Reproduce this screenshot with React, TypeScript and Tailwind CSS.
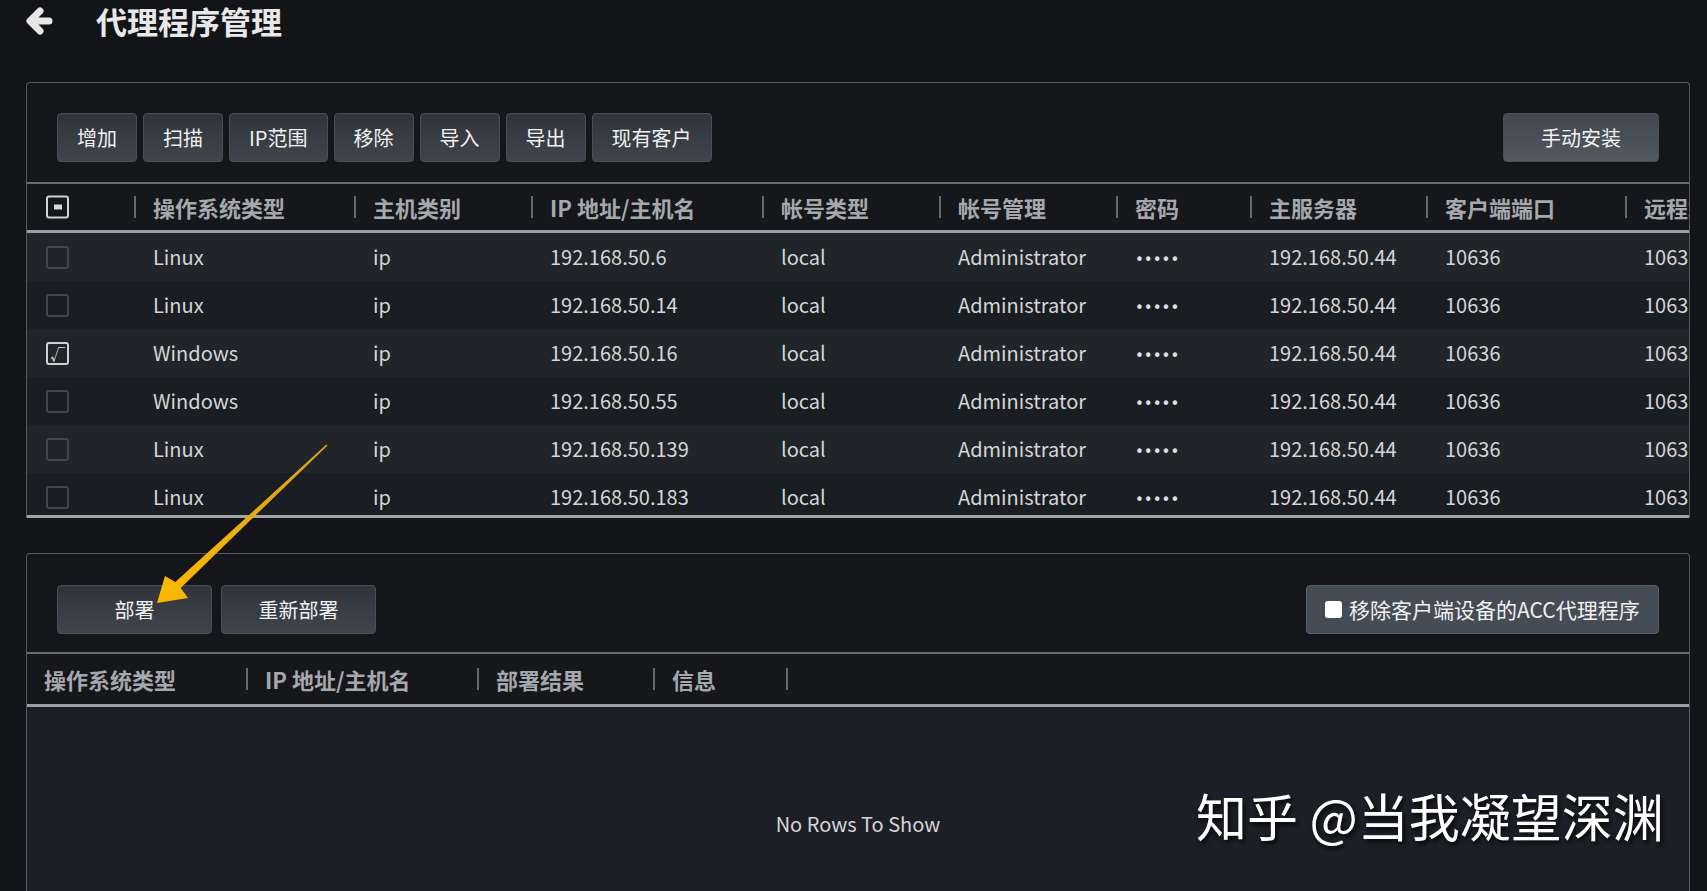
const ROWS = [
  { os: "Linux", ip: "192.168.50.6" },
  { os: "Linux", ip: "192.168.50.14" },
  { os: "Windows", ip: "192.168.50.16", checked: true },
  { os: "Windows", ip: "192.168.50.55" },
  { os: "Linux", ip: "192.168.50.139" },
  { os: "Linux", ip: "192.168.50.183" },
];

const COLS = [
  { label: "", w: "w-[109px]" },
  { label: "操作系统类型", w: "w-[220px]" },
  { label: "主机类别", w: "w-[177px]" },
  { label: "IP 地址/主机名", w: "w-[231px]" },
  { label: "帐号类型", w: "w-[177px]" },
  { label: "帐号管理", w: "w-[177px]" },
  { label: "密码", w: "w-[134px]" },
  { label: "主服务器", w: "w-[176px]" },
  { label: "客户端端口", w: "w-[199px]" },
  { label: "远程端口", w: "w-[160px]" },
];

const DEPLOY_COLS = [
  { label: "操作系统类型", w: "w-[221px]" },
  { label: "IP 地址/主机名", w: "w-[231px]" },
  { label: "部署结果", w: "w-[176px]" },
  { label: "信息", w: "w-[133px]" },
];

const TOOLBAR = ["增加", "扫描", "IP范围", "移除", "导入", "导出", "现有客户"];

function Btn({ children, className = "" }: { children: React.ReactNode; className?: string }) {
  return (
    <button
      className={
        "flex h-[49px] shrink-0 items-center justify-center rounded-[4px] border border-[#4a4f57] bg-linear-to-b from-[#30343a] to-[#40454d] px-[19px] text-[20px] text-[#f1f1f1] " +
        className
      }
    >
      {children}
    </button>
  );
}

function HeaderCell({ label, w, first }: { label: string; w: string; first?: boolean }) {
  return (
    <div className={`relative flex h-full shrink-0 items-center ${w} ${first ? "pl-[19px]" : "pl-[17px]"}`}>
      {label && (
        <span className="whitespace-nowrap text-[22px] font-bold text-[#a5a8ac]">{label}</span>
      )}
      <span className="absolute right-0 top-1/2 h-[22px] w-[2px] -translate-y-1/2 bg-[#66696e]" />
    </div>
  );
}

function Check({ checked }: { checked?: boolean }) {
  return (
    <span
      className={`flex h-[23px] w-[23px] items-center justify-center rounded-[3px] border-2 ${
        checked ? "border-[#cfd1d3]" : "border-[#42464d]"
      }`}
    >
      {checked && <span className="text-[15px] leading-none text-[#e2e2e2]">√</span>}
    </span>
  );
}

export default function App() {
  const cell = "flex h-full shrink-0 items-center border border-transparent pl-[16px] whitespace-nowrap";
  return (
    <div className="relative h-[891px] w-full overflow-hidden bg-[#121418] font-['Noto_Sans_CJK_SC','Noto_Sans',sans-serif] text-[#d4d6d8]">
      {/* title */}
      <div className="flex h-[41px] items-center pl-[26px]">
        <svg width="28" height="30" viewBox="0 0 28 30" className="text-[#e6e6e6]">
          <path
            d="M14 5 L4 15 L14 25 M5 15 H23"
            fill="none"
            stroke="currentColor"
            strokeWidth="7"
            strokeLinecap="round"
            strokeLinejoin="round"
          />
        </svg>
        <h1 className="ml-[42px] text-[31px] font-bold leading-[1.2] text-[#e8e8e8]">代理程序管理</h1>
      </div>

      {/* agents panel */}
      <div className="ml-[26px] mt-[41px] w-[1664px] overflow-hidden rounded-t-[4px] border border-b-0 border-[#55595f] bg-[#14161a]">
        <div className="flex h-[99px] items-start justify-between px-[30px] pt-[30px]">
          <div className="flex gap-[6px]">
            {TOOLBAR.map((t) => (
              <Btn key={t}>{t}</Btn>
            ))}
          </div>
          <Btn className="w-[156px] from-[#42474f] to-[#525961]">手动安装</Btn>
        </div>

        <div className="relative flex h-[51px] border-t-2 border-b-[3px] border-t-[#686b70] border-b-[#9c9fa3] bg-[#15171b]">
          {COLS.map((c, i) => (
            <HeaderCell key={i} label={c.label} w={c.w} first={i === 0} />
          ))}
          <span className="absolute left-[19px] top-1/2 flex h-[23px] w-[23px] -translate-y-1/2 items-center justify-center rounded-[3px] border-2 border-[#cfd1d3]">
            <span className="h-[5px] w-[8px] bg-[#d8d8d8]" />
          </span>
        </div>

        <div className="h-[285px] overflow-hidden border-b-[3px] border-[#a0a3a7]">
          {ROWS.map((r, i) => (
            <div
              key={i}
              className={`flex h-[48px] text-[20px] ${i % 2 === 0 ? "bg-[#212429]" : "bg-[#1a1d22]"}`}
            >
              <div className={`${COLS[0].w} flex h-full shrink-0 items-center pl-[19px]`}>
                <Check checked={r.checked} />
              </div>
              <div className={`${cell} ${COLS[1].w}`}>{r.os}</div>
              <div className={`${cell} ${COLS[2].w}`}>ip</div>
              <div className={`${cell} ${COLS[3].w} ${r.checked ? "border-[#2d7fc0]" : ""}`}>{r.ip}</div>
              <div className={`${cell} ${COLS[4].w}`}>local</div>
              <div className={`${cell} ${COLS[5].w}`}>Administrator</div>
              <div className={`${cell} ${COLS[6].w}`}>
                <span className="relative top-[3px] font-['DejaVu_Sans'] text-[15px] text-[#e0e0e0]">•••••</span>
              </div>
              <div className={`${cell} ${COLS[7].w}`}>192.168.50.44</div>
              <div className={`${cell} ${COLS[8].w}`}>10636</div>
              <div className={`${cell} ${COLS[9].w}`}>10636</div>
            </div>
          ))}
        </div>
      </div>

      {/* deploy panel */}
      <div className="ml-[26px] mt-[35px] w-[1664px] overflow-hidden rounded-t-[4px] border border-b-0 border-[#55595f] bg-[#14161a]">
        <div className="flex h-[98px] items-start justify-between px-[30px] pt-[31px]">
          <div className="flex gap-[9px]">
            <Btn className="w-[155px]">部署</Btn>
            <Btn className="w-[155px]">重新部署</Btn>
          </div>
          <button className="flex h-[49px] w-[353px] items-center gap-[7px] rounded-[4px] border border-[#5a6068] bg-[#464c55] pl-[18px] text-[21px] text-[#f1f1f1]">
            <span className="h-[17px] w-[17px] shrink-0 rounded-[3px] bg-white" />
            <span className="whitespace-nowrap">移除客户端设备的ACC代理程序</span>
          </button>
        </div>

        <div className="flex h-[55px] border-t-2 border-b-[3px] border-t-[#686b70] border-b-[#9c9fa3] bg-[#15171b]">
          {DEPLOY_COLS.map((c, i) => (
            <HeaderCell key={i} label={c.label} w={c.w} />
          ))}
        </div>

        <div className="flex h-[234px] items-center justify-center bg-[#1c1f25]">
          <span className="text-[20px] text-[#d6d6d6]">No Rows To Show</span>
        </div>
      </div>

      {/* annotation arrow */}
      <svg className="pointer-events-none absolute left-0 top-0" width="1707" height="891" viewBox="0 0 1707 891">
        <defs>
          <linearGradient id="ar" x1="327" y1="445" x2="157" y2="603" gradientUnits="userSpaceOnUse">
            <stop offset="0" stopColor="#d9a21a" />
            <stop offset="1" stopColor="#fbb900" />
          </linearGradient>
        </defs>
        <polygon
          points="327.6,445.4 180.7,587.9 188,598 157,603 165,576 175.3,582.1 326.4,444.6"
          fill="url(#ar)"
        />
      </svg>

      {/* watermark */}
      <div className="pointer-events-none absolute left-[1196px] top-[790px] whitespace-nowrap text-[51px] leading-none text-white [text-shadow:2px_3px_4px_rgba(0,0,0,0.8)]">
        知乎 @当我凝望深渊
      </div>
    </div>
  );
}
